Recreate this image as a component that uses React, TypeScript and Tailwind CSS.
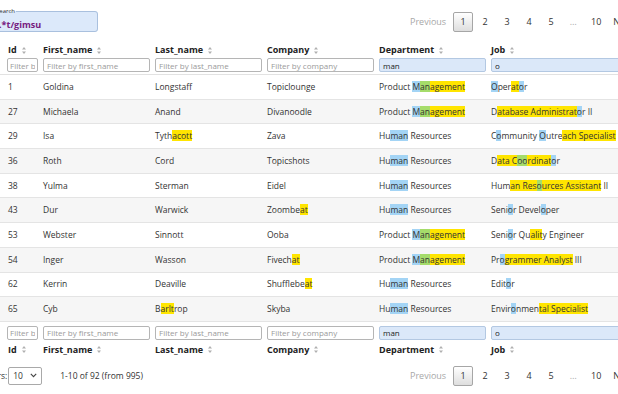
import React from 'react';

type Row = string[];

const PM = 'Product {bM}{gan}{yagement}';
const HR = 'Hu{bman} Resources';

// {y..} global search match, {b..} column filter match, {g..} both
const rows: Row[] = [
    ['1', 'Goldina', 'Longstaff', 'Topiclounge', PM, '{bO}per{yat}{bo}r'],
    ['27', 'Michaela', 'Anand', 'Divanoodle', PM, 'D{yatabase Administrat}{bo}r II'],
    ['29', 'Isa', 'Tyth{yacott}', 'Zava', HR, 'C{bo}mmunity {bO}utre{yach Specialist}'],
    ['36', 'Roth', 'Cord', 'Topicshots', HR, 'D{yata C}{goo}{yrdinat}{bo}r'],
    ['38', 'Yulma', 'Sterman', 'Eidel', HR, 'Hum{yan Res}{go}{yurces Assistant} II'],
    ['43', 'Dur', 'Warwick', 'Zoombe{yat}', HR, 'Seni{bo}r Devel{bo}per'],
    ['53', 'Webster', 'Sinnott', 'Ooba', PM, 'Seni{bo}r Qu{yalit}y Engineer'],
    ['54', 'Inger', 'Wasson', 'Fivech{yat}', PM, 'Pr{bo}{ygrammer Analyst} III'],
    ['62', 'Kerrin', 'Deaville', 'Shufflebe{yat}', HR, 'Edit{bo}r'],
    ['65', 'Cyb', 'B{yarlt}rop', 'Skyba', HR, 'Envir{bo}nmen{ytal Specialist}'],
];

const columns = ['Id', 'First_name', 'Last_name', 'Company', 'Department', 'Job'];
const filters = [
    { placeholder: 'Filter by id', value: '' },
    { placeholder: 'Filter by first_name', value: '' },
    { placeholder: 'Filter by last_name', value: '' },
    { placeholder: 'Filter by company', value: '' },
    { placeholder: 'Filter by department', value: 'man' },
    { placeholder: 'Filter by job', value: 'o' },
];

const marks: Record<string, string> = {
    y: 'bg-[#ffe500]',
    b: 'bg-[#a3d4f5]',
    g: 'bg-[#a5dc6a]',
};

const grid = 'grid grid-cols-[43px_112px_112px_112px_112px_150px] w-[641px]';

const Highlight: React.FC<{ text: string }> = ({ text }) => {
    const out: React.ReactNode[] = [];
    const re = /\{([ybg])([^}]*)\}|([^{]+)/g;
    let m: RegExpExecArray | null;
    let i = 0;
    while ((m = re.exec(text))) {
        if (m[3]) out.push(<span key={i++}>{m[3]}</span>);
        else out.push(<span key={i++} className={marks[m[1]]}>{m[2]}</span>);
    }
    return <>{out}</>;
};

const SortIcon = () => (
    <svg width="4" height="7" viewBox="0 0 4 7" className="ml-[5px] shrink-0">
        <path d="M2 0 L4 2.6 L0 2.6 Z M0 4.4 L4 4.4 L2 7 Z" fill="#b0b0b0" />
    </svg>
);

const LabelRow: React.FC<{ className?: string }> = ({ className = '' }) => (
    <div className={`${grid} ${className}`}>
        {columns.map((c, i) => (
            <div key={c} className={`flex items-center font-bold text-[9px] text-[#222] ${i === 0 ? 'pl-[8px]' : ''}`}>
                {c}
                <SortIcon />
            </div>
        ))}
    </div>
);

const FilterRow: React.FC<{ className?: string }> = ({ className = '' }) => (
    <div className={`${grid} ${className}`}>
        {filters.map((f, i) => (
            <div key={i} className={i === 0 ? 'pl-[7px] pr-[5px]' : 'pr-[5px]'}>
                <input
                    readOnly
                    value={f.value}
                    placeholder={f.placeholder}
                    className={`w-full h-[14px] rounded-[2px] border text-[8px] leading-[12px] outline-none placeholder:text-[#9a9a9a] ${
                        i === 0 ? 'px-[2px]' : 'px-[3px]'
                    } ${f.value ? 'bg-[#dbe8f9] border-[#b3c8e2] text-[#222]' : 'bg-white border-[#b5b5b5]'}`}
                />
            </div>
        ))}
    </div>
);

const Pagination = () => (
    <div className="flex items-center text-[9px] text-[#333]">
        <span className="text-[#a8a8a8] pr-[7px]">Previous</span>
        <span className="w-[20px] h-[20px] flex items-center justify-center rounded-[2px] border border-[#a6a6a6] bg-gradient-to-b from-white to-[#dedede] mr-[2px]">
            1
        </span>
        {['2', '3', '4', '5'].map((p) => (
            <span key={p} className="w-[20px] text-center mr-[2px]">{p}</span>
        ))}
        <span className="w-[20px] text-center mr-[2px] text-[#aaa]">…</span>
        <span className="w-[22px] text-center mr-[6px]">10</span>
        <span>Next</span>
    </div>
);

export default function App() {
    return (
        <div className="w-[618px] h-[394px] overflow-hidden bg-white text-[#333] text-[8.5px] leading-[12px] font-['Open_Sans','Noto_Sans',sans-serif]">
            {/* top bar */}
            <div className="flex h-[43px] w-[700px]">
                <div className="w-[410px] shrink-0">
                    <fieldset className="-ml-[12px] mt-[8px] w-[110px] h-[24px] border border-[#a9c0de] rounded-[3px] bg-[#dce9fa] pl-[6px]">
                        <legend className="text-[6px] leading-[7px] px-[1px] text-[#333]">Search</legend>
                        <div className="ml-[4px] mt-[4px] font-bold text-[9px] leading-[11px] text-[#76207f]">.*t/gimsu</div>
                    </fieldset>
                </div>
                <div className="pt-[12px]">
                    <Pagination />
                </div>
            </div>

            {/* header */}
            <LabelRow className="h-[14px]" />
            <FilterRow className="h-[18px] pt-[1px] border-b border-[#e2e2e2]" />

            {/* body */}
            {rows.map((r, ri) => (
                <div
                    key={r[0]}
                    className={`${grid} h-[24.7px] items-center border-b border-[#e4e4e4] ${ri % 2 ? 'bg-[#f6f6f6]' : 'bg-white'}`}
                >
                    {r.map((cell, ci) => (
                        <div key={ci} className={`whitespace-nowrap ${ci === 0 ? 'pl-[8px]' : ''}`}>
                            <Highlight text={cell} />
                        </div>
                    ))}
                </div>
            ))}

            {/* footer */}
            <FilterRow className="h-[21px] pt-[4px]" />
            <LabelRow className="h-[14px]" />

            {/* bottom bar */}
            <div className="flex h-[38px] w-[700px] pt-[9px]">
                <div className="w-[410px] shrink-0 flex items-center h-[20px]">
                    <span className="-ml-[32px]">Numbers:</span>
                    <div className="ml-[1px] w-[34px] h-[18px] flex items-center justify-between border border-[#a9a9a9] rounded-[2px] bg-white pl-[4px] pr-[4px]">
                        <span>10</span>
                        <svg width="7" height="5" viewBox="0 0 7 5">
                            <path d="M0.8 0.8 L3.5 3.6 L6.2 0.8" fill="none" stroke="#444" strokeWidth="1.1" />
                        </svg>
                    </div>
                    <span className="ml-[18px]">1-10 of 92 (from 995)</span>
                </div>
                <div className="h-[20px] flex items-center">
                    <Pagination />
                </div>
            </div>
        </div>
    );
}
